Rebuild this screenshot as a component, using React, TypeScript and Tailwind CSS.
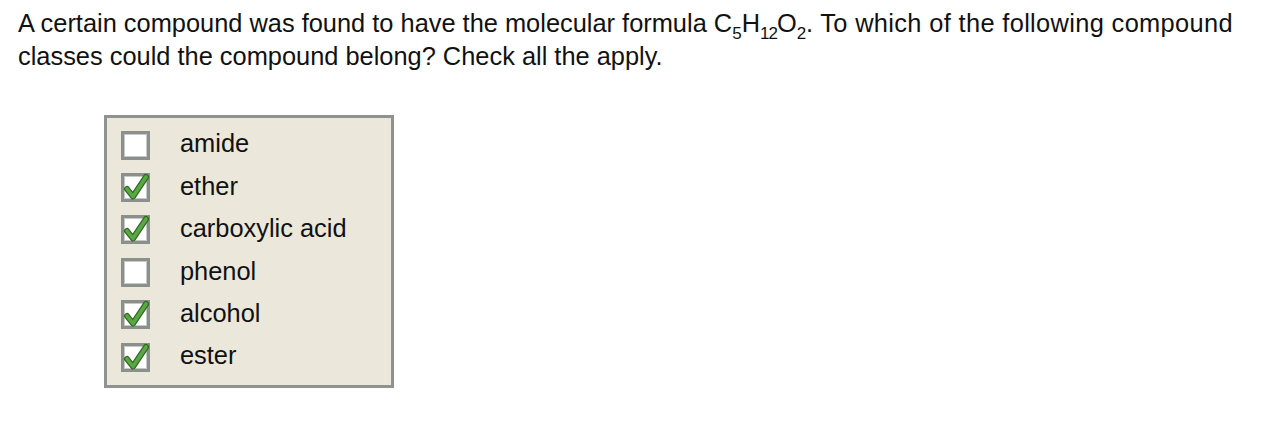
import React, { useState } from 'react';

const options = [
  { label: 'amide', checked: false },
  { label: 'ether', checked: true },
  { label: 'carboxylic acid', checked: true },
  { label: 'phenol', checked: false },
  { label: 'alcohol', checked: true },
  { label: 'ester', checked: true },
];

const CheckBox = ({ checked, onClick }: { checked: boolean; onClick: () => void }) => (
  <button
    type="button"
    onClick={onClick}
    className="relative w-[29px] h-[29px] border-[3px] border-[#8b908d] bg-white p-0 shrink-0"
  >
    <span className="block w-full h-full border border-[#c6cac6]" />
    {checked && (
      <svg width="29" height="29" viewBox="0 0 29 29" className="absolute left-[-3px] top-[-3px]">
        <polyline
          points="6,16 12,23.5 25,4"
          fill="none"
          stroke="#2f6a22"
          strokeWidth="6"
          strokeLinecap="round"
          strokeLinejoin="round"
        />
        <polyline
          points="6,16 12,23.5 25,4"
          fill="none"
          stroke="#5aa843"
          strokeWidth="3.6"
          strokeLinecap="round"
          strokeLinejoin="round"
        />
      </svg>
    )}
  </button>
);

const App = () => {
  const [items, setItems] = useState(options);

  const toggle = (i: number) =>
    setItems(items.map((it, idx) => (idx === i ? { ...it, checked: !it.checked } : it)));

  return (
    <div className="w-[1266px] h-[432px] bg-white text-[#111] font-['Liberation_Sans',Arial,sans-serif]">
      <p className="pl-[18px] pt-[7px] text-[25.4px] leading-[33px] pr-4">
        A certain compound was found to have the molecular formula C
        <sub className="text-[17px] align-[-3px] leading-none">5</sub>H
        <sub className="text-[17px] align-[-3px] leading-none tracking-[-1px]">12</sub>O
        <sub className="text-[17px] align-[-3px] leading-none">2</sub>.{' '}
        <span className="tracking-[0.35px]">To which of the following compound</span>{' '}
        classes could the compound belong? Check all the apply.
      </p>

      <div className="ml-[104px] mt-[42px] w-[290px] border-[3px] border-[#8e9390] bg-[#ebe7da] px-[14px] pt-[6px] pb-[7px]">
        {items.map((it, i) => (
          <div key={it.label} className="h-[42.4px] flex items-center gap-[30px]">
            <CheckBox checked={it.checked} onClick={() => toggle(i)} />
            <span className="text-[25.4px] leading-none -mt-[2px]">{it.label}</span>
          </div>
        ))}
      </div>
    </div>
  );
};

export default App;
